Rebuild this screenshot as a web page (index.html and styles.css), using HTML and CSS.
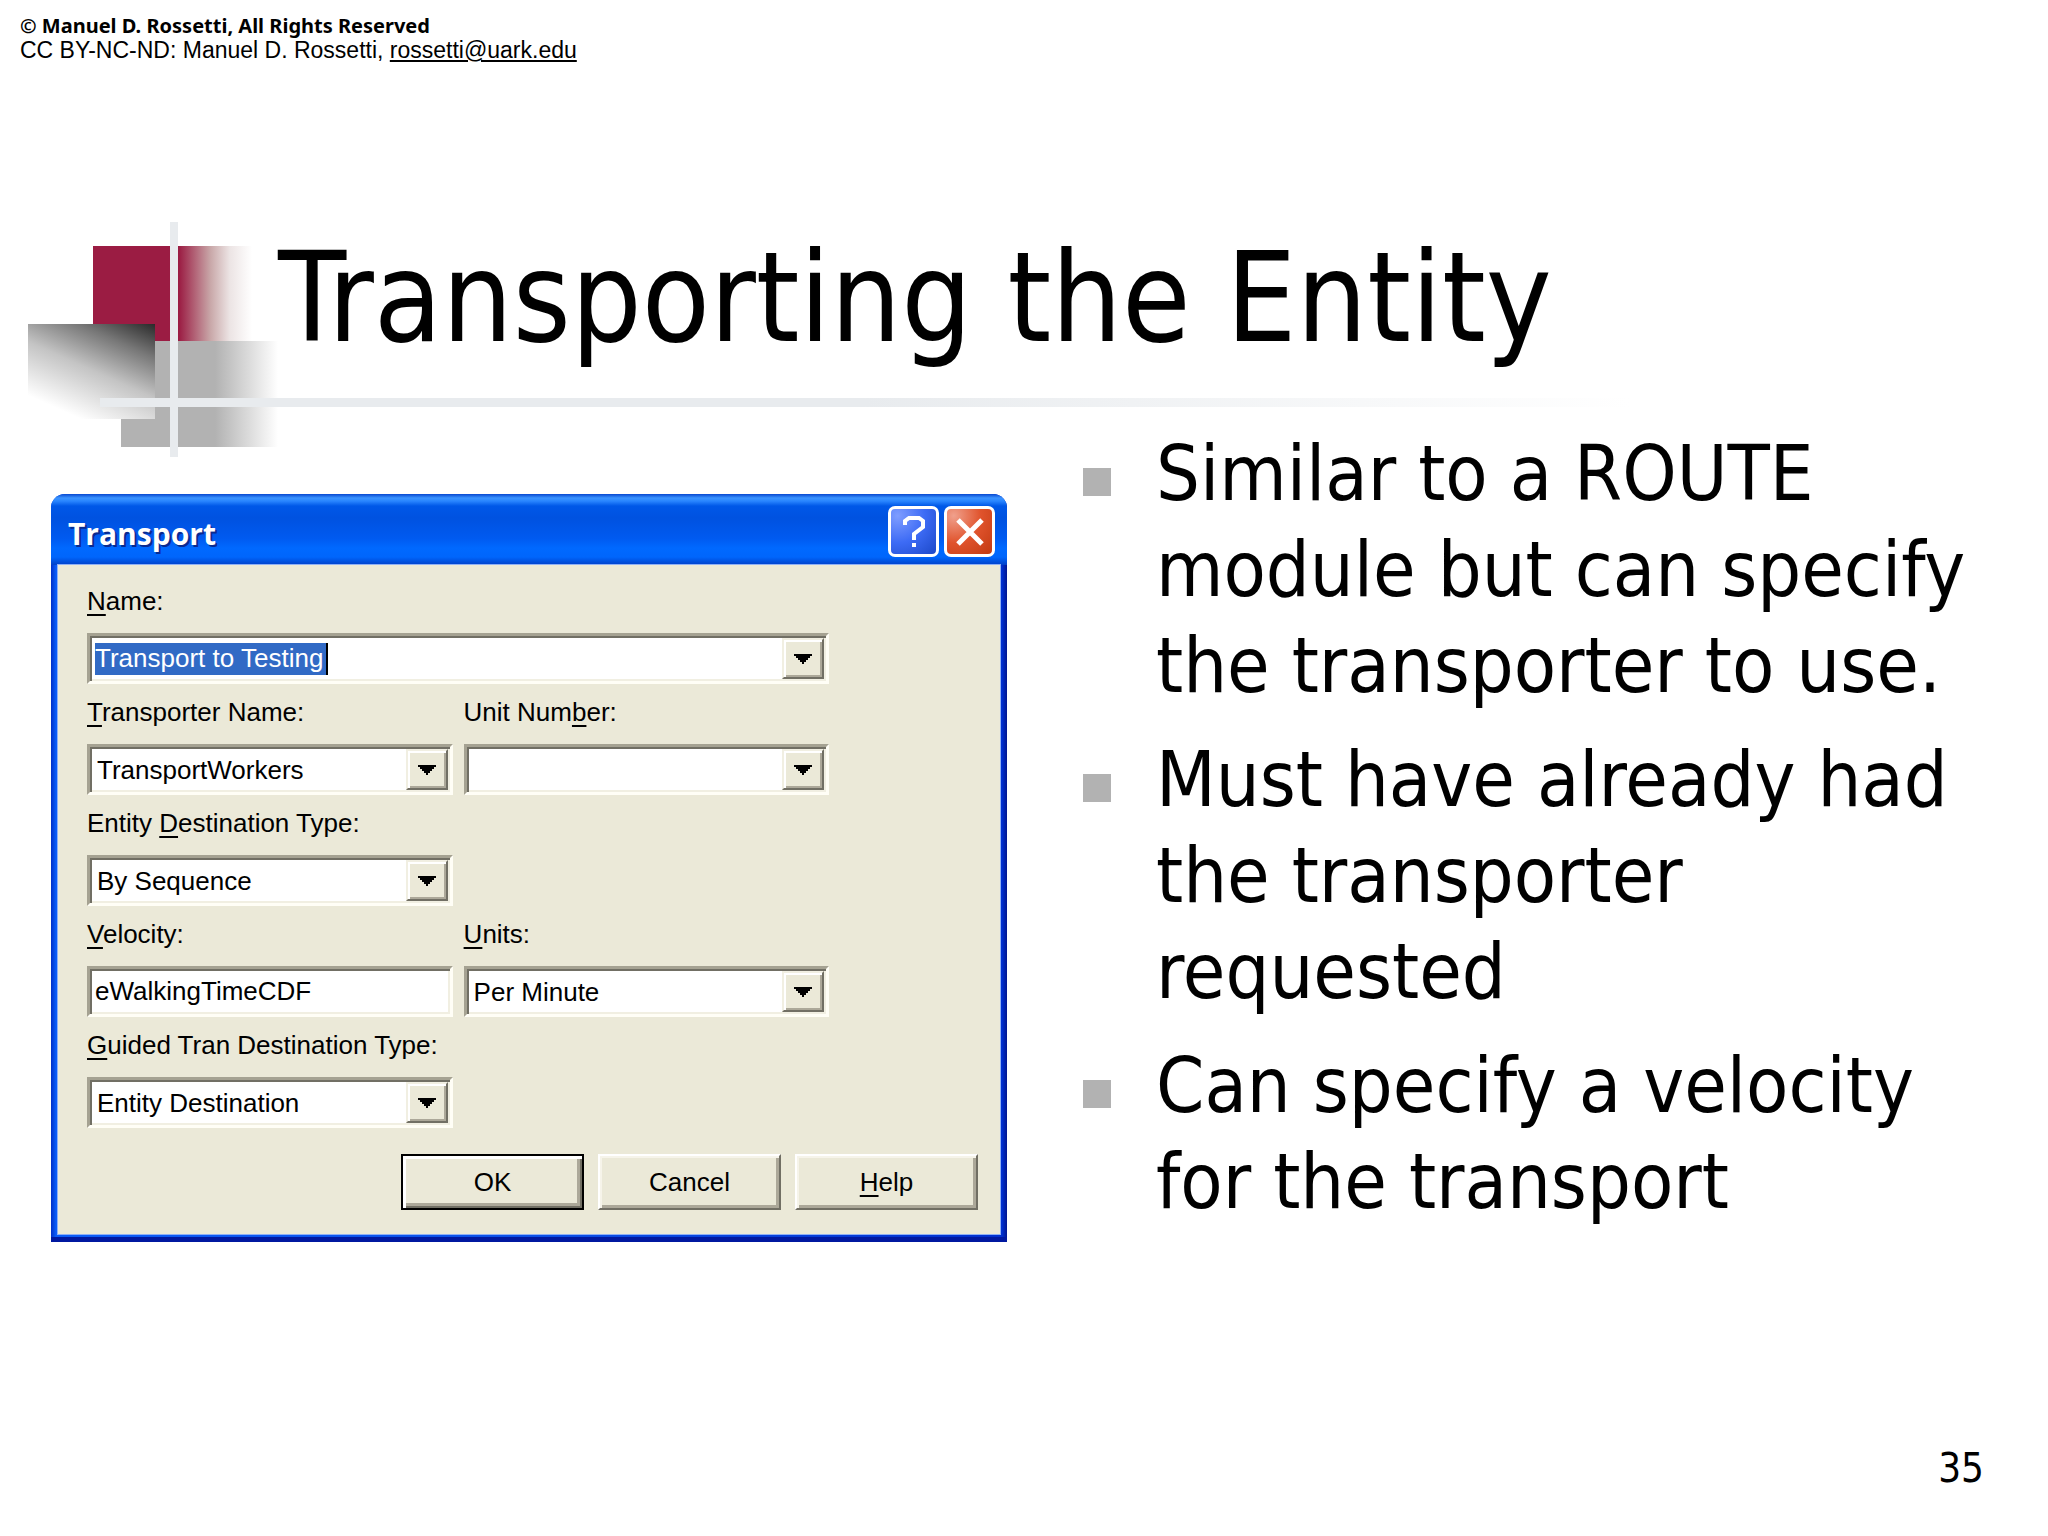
FILE: index.html
```html
<!DOCTYPE html>
<html lang="en">
<head>
	<title>Transporting the Entity</title>
	<meta charset="UTF-8">
	<link rel="stylesheet" href="styles.css">
</head>
<body>
	<div id="Copyright">
		<strong>© Manuel D. Rossetti, All Rights Reserved</strong>
		<div>CC BY-NC-ND: Manuel D. Rossetti, <a href="mailto:rossetti@uark.edu">rossetti@uark.edu</a></div>
	</div>

	<header id="Header">
		<svg id="Ornament" width="1640" height="236" viewBox="0 0 1640 236" aria-hidden="true">
			<defs>
				<linearGradient id="red" x1="0" x2="1" y1="0" y2="0">
					<stop offset="0" stop-color="#9b1c43"/>
					<stop offset=".54" stop-color="#9b1c43"/>
					<stop offset=".74" stop-color="#c9a8a9"/>
					<stop offset=".86" stop-color="#ece4e4"/>
					<stop offset="1" stop-color="#fff"/>
				</linearGradient>
				<linearGradient id="grey" x1="0" x2="1" y1="0" y2="0">
					<stop offset="0" stop-color="#b2b2b2"/>
					<stop offset=".6" stop-color="#b2b2b2"/>
					<stop offset="1" stop-color="#fff"/>
				</linearGradient>
				<linearGradient id="black" gradientUnits="userSpaceOnUse" x1="160" y1="98" x2="110" y2="210">
					<stop offset="0" stop-color="#1c1c1c"/>
					<stop offset=".3" stop-color="#777"/>
					<stop offset=".6" stop-color="#c4c4c4"/>
					<stop offset="1" stop-color="#fff"/>
				</linearGradient>
				<linearGradient id="line" x1="0" x2="1" y1="0" y2="0">
					<stop offset="0" stop-color="#e8ebee"/>
					<stop offset=".5" stop-color="#e8ebee"/>
					<stop offset="1" stop-color="#fff"/>
				</linearGradient>
			</defs>
			<rect x="93" y="24" width="159" height="95" fill="url(#red)"/>
			<rect x="121" y="119" width="157" height="106" fill="url(#grey)"/>
			<rect x="28" y="102" width="127" height="95" fill="url(#black)"/>
			<rect x="100" y="176" width="1530" height="9" fill="url(#line)"/>
			<rect x="170" y="0" width="8" height="235" fill="#e8ebee"/>
		</svg>
		<h1>Transporting the Entity</h1>
	</header>

	<main id="Content">
		<form id="Dialog">
			<div class="titlebar">
				<h2>Transport</h2>
				<button type="button" class="caption help" aria-label="Help">
					<svg width="24" height="34" viewBox="0 0 24 34"><path d="M3 10V6L7 3H17L21 6V12L12 19V25M10 30H14" fill="none" stroke="#fff" stroke-width="4"/></svg>
				</button>
				<button type="button" class="caption close" aria-label="Close">
					<svg width="30" height="30" viewBox="0 0 30 30"><path d="M3 3L27 27M27 3L3 27" fill="none" stroke="#fff" stroke-width="5"/></svg>
				</button>
			</div>
			<div class="panel">
				<div class="fields">
					<div class="field wide">
						<label for="name"><u>N</u>ame:</label>
						<div class="box">
							<input id="name" class="selected" type="text" value="Transport to Testing">
							<span class="drop"><svg width="18" height="10" viewBox="0 0 18 10"><path d="M0 0H18V2H16V4H14V6H12V8H10V10H8V8H6V6H4V4H2V2H0z"/></svg></span>
						</div>
					</div>
					<div class="field">
						<label for="transporter"><u>T</u>ransporter Name:</label>
						<div class="box">
							<select id="transporter"><option>TransportWorkers</option></select>
							<span class="drop"><svg width="18" height="10" viewBox="0 0 18 10"><path d="M0 0H18V2H16V4H14V6H12V8H10V10H8V8H6V6H4V4H2V2H0z"/></svg></span>
						</div>
					</div>
					<div class="field">
						<label for="unit">Unit Num<u>b</u>er:</label>
						<div class="box">
							<select id="unit"><option></option></select>
							<span class="drop"><svg width="18" height="10" viewBox="0 0 18 10"><path d="M0 0H18V2H16V4H14V6H12V8H10V10H8V8H6V6H4V4H2V2H0z"/></svg></span>
						</div>
					</div>
					<div class="field first">
						<label for="destination">Entity <u>D</u>estination Type:</label>
						<div class="box">
							<select id="destination"><option>By Sequence</option></select>
							<span class="drop"><svg width="18" height="10" viewBox="0 0 18 10"><path d="M0 0H18V2H16V4H14V6H12V8H10V10H8V8H6V6H4V4H2V2H0z"/></svg></span>
						</div>
					</div>
					<div class="field first">
						<label for="velocity"><u>V</u>elocity:</label>
						<div class="box">
							<input id="velocity" type="text" value="eWalkingTimeCDF">
						</div>
					</div>
					<div class="field">
						<label for="units"><u>U</u>nits:</label>
						<div class="box">
							<select id="units"><option>Per Minute</option></select>
							<span class="drop"><svg width="18" height="10" viewBox="0 0 18 10"><path d="M0 0H18V2H16V4H14V6H12V8H10V10H8V8H6V6H4V4H2V2H0z"/></svg></span>
						</div>
					</div>
					<div class="field first">
						<label for="guided"><u>G</u>uided Tran Destination Type:</label>
						<div class="box">
							<select id="guided"><option>Entity Destination</option></select>
							<span class="drop"><svg width="18" height="10" viewBox="0 0 18 10"><path d="M0 0H18V2H16V4H14V6H12V8H10V10H8V8H6V6H4V4H2V2H0z"/></svg></span>
						</div>
					</div>
				</div>
				<div class="buttons">
					<button type="button" class="default">OK</button>
					<button type="button">Cancel</button>
					<button type="button"><u>H</u>elp</button>
				</div>
			</div>
		</form>

		<ul id="Points">
			<li>Similar to a ROUTE module but can specify the transporter to use.</li>
			<li>Must have already had the transporter requested</li>
			<li>Can specify a velocity for the transport</li>
		</ul>
	</main>

	<footer id="PageNumber">35</footer>
</body>
</html>
```
FILE: styles.css
```css
* {
	box-sizing: border-box;
}

body {
	display: flex;
	flex-direction: column;
	min-height: 100vh;
	margin: 0;
	background-color: #fff;
	color: #000;
	font-family: "DejaVu Sans Condensed", "DejaVu Sans", sans-serif;
}

#Copyright {
	padding: 14px 20px 0;
	font-family: "Liberation Sans", Arial, sans-serif;
	font-size: 23px;
	line-height: 24px;
}

#Copyright strong {
	display: block;
	font-family: "Noto Sans", sans-serif;
	font-size: 20px;
}

#Copyright a {
	color: #000;
}

#Header {
	position: relative;
	margin-top: 160px;
	padding: 0 80px 0 278px;
}

#Ornament {
	position: absolute;
	left: 0;
	top: 0;
	max-width: 100%;
}

#Header h1 {
	position: relative;
	margin: 0;
	font-size: 124px;
	font-weight: normal;
	line-height: 152px;
}

#Content {
	display: grid;
	grid-template-columns: 956fr 921fr;
	align-items: start;
	column-gap: 76px;
	margin-top: 48px;
	padding: 0 44px 0 51px;
}

#Dialog {
	margin-top: 72px;
	padding-bottom: 8px;
	border-radius: 14px 14px 0 0;
	background: linear-gradient(to right, #0030c8 0, #0a5cf8 5px, #0a50e8 50%, #0030d0 calc(100% - 5px), #001690 100%);
	box-shadow: inset 0 -5px 0 #0018a0;
	font-family: "Liberation Sans", Arial, sans-serif;
	font-size: 26px;
	overflow: hidden;
}

.titlebar {
	display: flex;
	align-items: center;
	gap: 5px;
	height: 71px;
	padding: 4px 12px 0 17px;
	background: linear-gradient(#0848d0 0, #3a93ff 4px, #2a86ff 7px, #0058e8 12px, #0052e0 24px, #005af0 44px, #0069ff 54px, #0066fc 63px, #0040c8 71px);
}

.titlebar h2 {
	flex: 1;
	margin: 0;
	padding-top: 4px;
	color: #fff;
	font-family: "Open Sans", sans-serif;
	font-size: 30px;
	line-height: 40px;
	text-shadow: 2px 2px 0 #0a2a90;
}

.caption {
	display: flex;
	align-items: center;
	justify-content: center;
	width: 51px;
	height: 51px;
	padding: 0;
	border: 3px solid #fff;
	border-radius: 7px;
}

.help {
	background: radial-gradient(circle at 15% 15%, #7f9dff, #3d6bf5 50%, #1c48c8);
}

.close {
	background: radial-gradient(circle at 15% 15%, #f0a08c, #e0532c 50%, #c23a12);
}

.panel {
	margin: 0 7px;
	padding: 20px 22px 24px 29px;
	background-color: #ebe9d8;
	box-shadow: 0 0 0 1px #8fb0f5;
}

.fields {
	display: grid;
	grid-template-columns: 1fr 1fr;
	gap: 12px 11px;
	width: 83.3%;
}

.wide {
	grid-column: 1 / 3;
}

.first {
	grid-column: 1;
}

.field label {
	display: block;
	margin-bottom: 16px;
	line-height: 32px;
}

u {
	text-underline-offset: 4px;
	text-decoration-thickness: 2px;
}

.box {
	position: relative;
	display: flex;
	align-items: center;
	height: 51px;
	padding-left: 5px;
	border: 3px solid;
	border-color: #a5a292 #fffef6 #fffef6 #a5a292;
	background-color: #fff;
	box-shadow: inset 2px 2px 0 #716f64, inset -2px -2px 0 #f1efe2;
}

.box select,
.box input {
	width: 100%;
	height: 36px;
	padding: 0;
	border: 0;
	outline: 0;
	background-color: transparent;
	color: #000;
	font: inherit;
	appearance: none;
}

.box select {
	padding-left: 2px;
}

.box .selected {
	width: 233px;
	height: 32px;
	border-right: 2px solid #000;
	background-color: #316ac5;
	color: #fff;
}

.drop {
	position: absolute;
	top: 2px;
	right: 2px;
	bottom: 2px;
	display: flex;
	align-items: center;
	justify-content: center;
	width: 42px;
	border: 2px solid;
	border-color: #f1efe2 #716f64 #716f64 #f1efe2;
	background-color: #ebe9d8;
	box-shadow: inset 2px 2px 0 #fff, inset -2px -2px 0 #aca899;
	pointer-events: none;
}

.buttons {
	display: flex;
	justify-content: flex-end;
	gap: 14px;
	margin-top: 26px;
}

.buttons button {
	width: 183px;
	height: 56px;
	padding: 0;
	border: 2px solid;
	border-color: #fff #716f64 #716f64 #fff;
	background-color: #ebe9d8;
	box-shadow: inset 2px 2px 0 #f6f4ea, inset -3px -3px 0 #aca899;
	color: #000;
	font: inherit;
}

.buttons .default {
	border-color: #000;
	box-shadow: inset 3px 3px 0 #fff, inset -2px -2px 0 #716f64, inset -5px -5px 0 #aca899;
}

#Points {
	margin: 0;
	padding: 4px 0 0;
	list-style: none;
	font-size: 77px;
	line-height: 96px;
}

#Points li {
	position: relative;
	margin-bottom: 18px;
	padding-left: 73px;
}

#Points li::before {
	content: "";
	position: absolute;
	left: 0;
	top: 42px;
	width: 28px;
	height: 28px;
	background-color: #b2b2b2;
}

#PageNumber {
	margin-top: auto;
	padding: 0 64px 44px;
	font-size: 40px;
	line-height: 48px;
	text-align: right;
}
```
